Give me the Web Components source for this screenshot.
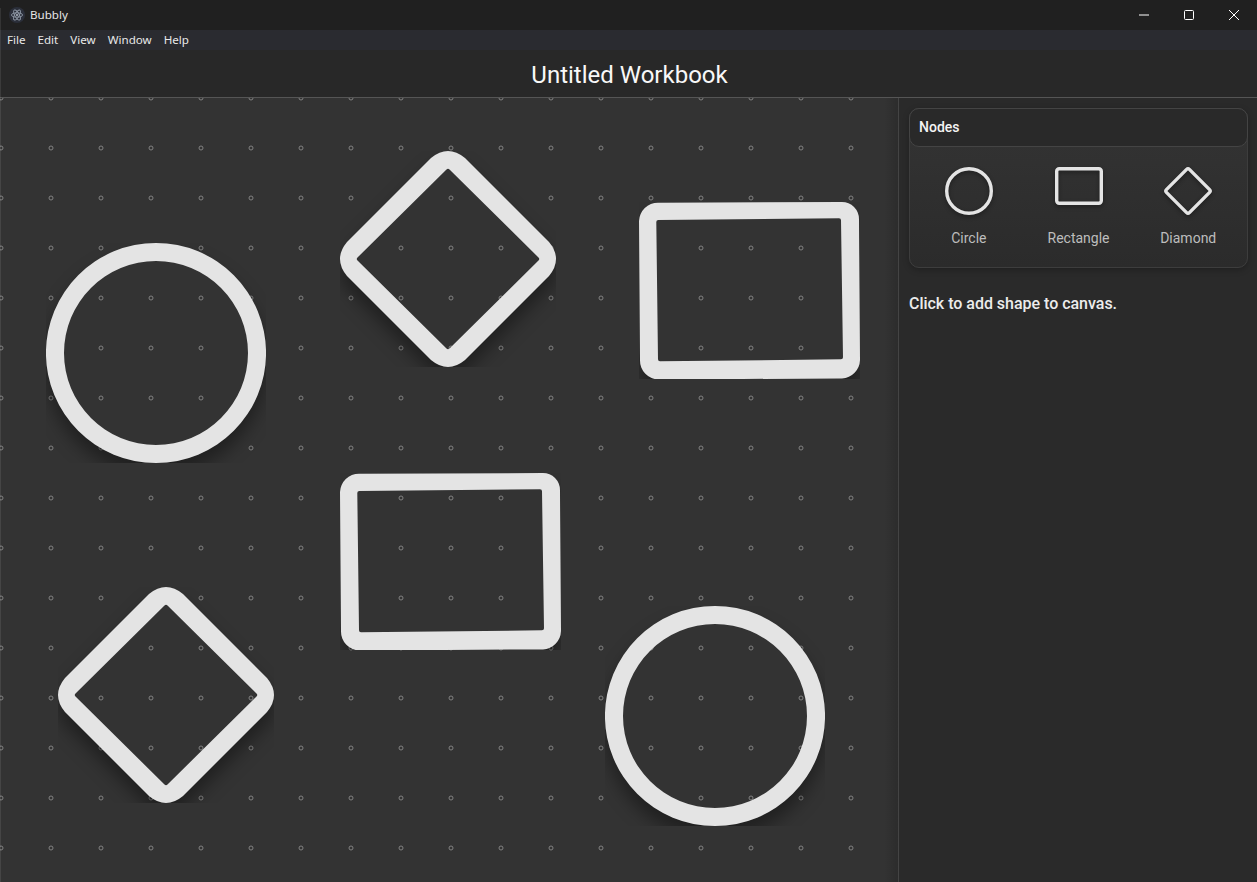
<!DOCTYPE html>
<html>
<head>
<meta charset="utf-8">
<title>Bubbly</title>
<style>
  html, body { margin: 0; height: 100%; background: #2a2a2a; overflow: hidden; }
  body { display: flex; flex-direction: column; height: 882px; position: relative; }
  /* thin window edge, lies over everything */
  body::after { content: ""; position: absolute; left: 0; top: 8px; bottom: 0; width: 1px; background: rgba(255,255,255,.09); }
</style>
</head>
<body>
<title-bar>Bubbly</title-bar>
<menu-bar></menu-bar>
<workbook-header>Untitled Workbook</workbook-header>
<main-area>
  <dot-canvas slot="canvas">
    <canvas-shape type="circle" x="46" y="145"></canvas-shape>
    <canvas-shape type="diamond" x="340" y="53"></canvas-shape>
    <canvas-shape type="rectangle" x="639" y="104"></canvas-shape>
    <canvas-shape type="rectangle" x="339.5" y="375"></canvas-shape>
    <canvas-shape type="diamond" x="58" y="489"></canvas-shape>
    <canvas-shape type="circle" x="605" y="508"></canvas-shape>
  </dot-canvas>
  <side-panel slot="side"></side-panel>
</main-area>

<script>
const SHAPES = {
  circle: {
    w: 220, h: 220,
    outer: 'M110,0 A110,110 0 1 1 110,220 A110,110 0 1 1 110,0 Z',
    inner: 'M110,18 A92,92 0 1 0 110,202 A92,92 0 1 0 110,18 Z'
  },
  diamond: {
    w: 216, h: 216,
    outer: 'M91,7 Q108,-7 125,7 L209,91 Q223,108 209,125 L125,209 Q108,223 91,209 L7,125 Q-7,108 7,91 Z',
    inner: 'M106.5,18.5 L17.5,106.5 Q16,108 17.5,109.5 L106.5,197.5 Q108,199 109.5,197.5 L198.5,109.5 Q200,108 198.5,106.5 L109.5,18.5 Q108,17 106.5,18.5 Z'
  },
  rectangle: {
    w: 221, h: 177,
    outer: 'M0,19 A19,19 0 0 1 19,0.7 L203,0 A17,17 0 0 1 220,17 L221,158 A19,19 0 0 1 203,176.4 L20,177.5 A19,19 0 0 1 1,158 Z',
    inner: 'M19.3,18 L200,16.3 Q202,16.3 202,18.3 L204,155.3 Q204,157.3 202,157.3 L21,159.3 Q19,159.3 19,157.3 L17.3,20 Q17.3,18 19.3,18 Z'
  }
}

class TitleBar extends HTMLElement {
  constructor() {
    super()
    this.attachShadow({ mode: 'open' })
    this.shadowRoot.innerHTML = `
      <style>
        :host {
          display: flex;
          align-items: center;
          height: 30px;
          box-sizing: border-box;
          padding: 0 1px 1px 0;
          flex: none;
          background: #202020;
          color: #e6e6e6;
          font: 11.6px "Noto Sans", sans-serif;
        }
        .logo { width: 16px; height: 16px; margin: 0 5px 0 9px; }
        .title { flex: 1; }
        .btn { width: 45px; height: 29px; display: flex; align-items: center; justify-content: center; }
      </style>
      <svg class="logo" viewBox="0 0 16 16" fill="none">
        <circle cx="8" cy="8" r="8" fill="#2b2f3a"/>
        <g stroke="#8f98a6" stroke-width="0.9">
          <ellipse cx="8" cy="8" rx="5.6" ry="2.2"/>
          <ellipse cx="8" cy="8" rx="5.6" ry="2.2" transform="rotate(60 8 8)"/>
          <ellipse cx="8" cy="8" rx="5.6" ry="2.2" transform="rotate(120 8 8)"/>
        </g>
        <circle cx="8" cy="8" r="1" fill="#b4bcc8"/>
      </svg>
      <span class="title"><slot></slot></span>
      <div class="btn"><svg width="10" height="10" viewBox="0 0 10 10"><path d="M0 5H10" stroke="#fff"/></svg></div>
      <div class="btn"><svg width="10" height="10" viewBox="0 0 10 10"><rect x="0.5" y="0.5" width="9" height="9" rx="1" fill="none" stroke="#fff"/></svg></div>
      <div class="btn"><svg width="10" height="10" viewBox="0 0 10 10"><path d="M0 0L10 10M10 0L0 10" stroke="#fff"/></svg></div>
    `
  }
}

class MenuBar extends HTMLElement {
  constructor() {
    super()
    this.attachShadow({ mode: 'open' })
    this.shadowRoot.innerHTML = `
      <style>
        :host {
          display: flex;
          align-items: center;
          gap: 12px;
          height: 20px;
          box-sizing: border-box;
          padding: 0 0 2px 7px;
          flex: none;
          background: #2a2b30;
          color: #e8e8e8;
          font: 11.6px "Noto Sans", sans-serif;
        }
      </style>
      <span>File</span><span>Edit</span><span>View</span><span>Window</span><span>Help</span>
    `
  }
}

class WorkbookHeader extends HTMLElement {
  constructor() {
    super()
    this.attachShadow({ mode: 'open' })
    this.shadowRoot.innerHTML = `
      <style>
        :host {
          display: flex;
          align-items: center;
          justify-content: center;
          height: 47px;
          box-sizing: content-box;
          padding-left: 2px;
          flex: none;
          background: #282828;
          border-bottom: 1px solid #555;
          color: #f8f8f8;
          font: 400 24px Roboto, sans-serif;
        }
        span { position: relative; top: 1px; }
      </style>
      <span><slot></slot></span>
    `
  }
}

class MainArea extends HTMLElement {
  constructor() {
    super()
    this.attachShadow({ mode: 'open' })
    this.shadowRoot.innerHTML = `
      <style>
        :host { display: flex; flex: 1; min-height: 0; }
      </style>
      <slot name="canvas"></slot>
      <slot name="side"></slot>
    `
  }
}

class DotCanvas extends HTMLElement {
  constructor() {
    super()
    this.attachShadow({ mode: 'open' })
    this.shadowRoot.innerHTML = `
      <style>
        :host {
          display: block;
          position: relative;
          width: 898px;
          flex: none;
          overflow: hidden;
          background: #333;
        }
        svg.dots { position: absolute; left: 0; top: 0; width: 100%; height: 100%; }
        .edge {
          position: absolute;
          top: 0;
          bottom: 0;
          right: 0;
          width: 14px;
          background: linear-gradient(to right, rgba(0,0,0,0), rgba(0,0,0,.14));
        }
      </style>
      <svg class="dots">
        <defs>
          <pattern id="dot" x="-24" y="-25" width="50" height="50" patternUnits="userSpaceOnUse">
            <circle cx="25" cy="25" r="2" fill="none" stroke="#808080" stroke-width="1"/>
          </pattern>
        </defs>
        <rect width="100%" height="100%" fill="url(#dot)"/>
      </svg>
      <div class="edge"></div>
      <slot></slot>
    `
  }
}

class CanvasShape extends HTMLElement {
  constructor() {
    super()
    this.attachShadow({ mode: 'open' })
  }

  connectedCallback() {
    const { w, h, outer, inner } = SHAPES[this.getAttribute('type')]
    // the shadow only falls outside the shape, the middle stays see through
    this.shadowRoot.innerHTML = `
      <style>
        :host {
          display: block;
          position: absolute;
          left: ${this.getAttribute('x')}px;
          top: ${this.getAttribute('y')}px;
          width: ${w}px;
          height: ${h}px;
        }
        svg { display: block; overflow: hidden; }
      </style>
      <svg width="${w}" height="${h}" viewBox="0 0 ${w} ${h}">
        <defs>
          <filter id="soft" x="-20%" y="-20%" width="140%" height="140%">
            <feGaussianBlur stdDeviation="9"/>
          </filter>
          <mask id="hole">
            <rect width="${w}" height="${h}" fill="#fff"/>
            <path d="${outer}" fill="#000"/>
          </mask>
        </defs>
        <g mask="url(#hole)">
          <path d="${outer}" fill="#000" fill-opacity=".38" filter="url(#soft)" transform="translate(0 12)"/>
        </g>
        <path d="${outer} ${inner}" fill="#e4e4e4" fill-rule="evenodd"/>
      </svg>
    `
  }
}

class NodeButton extends HTMLElement {
  constructor() {
    super()
    this.attachShadow({ mode: 'open' })
  }

  connectedCallback() {
    const type = this.getAttribute('type')
    const icons = {
      circle: '<circle cx="24" cy="24" r="22.3" fill="none" stroke="#e4e4e4" stroke-width="3.4"/>',
      rectangle: '<rect x="1.7" y="1.7" width="44.6" height="34.6" rx="2.5" fill="none" stroke="#e4e4e4" stroke-width="3.4"/>',
      diamond: '<path d="M22.6 2.4 L2.4 22.6 Q1 24 2.4 25.4 L22.6 45.6 Q24 47 25.4 45.6 L45.6 25.4 Q47 24 45.6 22.6 L25.4 2.4 Q24 1 22.6 2.4 Z" fill="none" stroke="#e4e4e4" stroke-width="3.4"/>'
    }
    this.shadowRoot.innerHTML = `
      <style>
        :host {
          display: flex;
          flex-direction: column;
          align-items: center;
          color: #bdbdbd;
          font: 14px Roboto, sans-serif;
        }
        svg { display: block; filter: drop-shadow(0 2px 2px rgba(0,0,0,.35)); }
        .icon { height: 48px; }
        span { margin-top: 15px; line-height: 17px; }
      </style>
      <div class="icon"><svg width="48" height="48" viewBox="0 0 48 48">${icons[type]}</svg></div>
      <span><slot></slot></span>
    `
  }
}

class NodesCard extends HTMLElement {
  constructor() {
    super()
    this.attachShadow({ mode: 'open' })
    this.shadowRoot.innerHTML = `
      <style>
        :host {
          display: block;
          height: 160px;
          box-sizing: border-box;
          border: 1px solid #3d3d3d;
          border-radius: 10px;
          background: linear-gradient(#343434, #2b2b2b);
          box-shadow: 0 2px 6px rgba(0,0,0,.25);
        }
        header {
          height: 39px;
          box-sizing: border-box;
          margin: -1px -1px 0;
          padding: 0 0 2px 9px;
          display: flex;
          align-items: center;
          background: #292929;
          border: 1px solid #444;
          border-radius: 10px;
          color: #f4f4f4;
          font: 500 14px Roboto, sans-serif;
        }
        .items {
          display: grid;
          grid-template-columns: repeat(3, 109.7px);
          padding: 20px 0 0 4px;
        }
      </style>
      <header>Nodes</header>
      <div class="items"><slot></slot></div>
    `
  }
}

class SidePanel extends HTMLElement {
  constructor() {
    super()
    this.attachShadow({ mode: 'open' })
    this.shadowRoot.innerHTML = `
      <style>
        :host {
          display: block;
          flex: 1;
          box-sizing: border-box;
          padding: 10px 9px 0 10px;
          background: #2a2a2a;
          border-left: 1px solid #444;
        }
        p {
          margin: 26px 0 0;
          color: #ececec;
          font: 500 16px Roboto, sans-serif;
          letter-spacing: -0.02px;
        }
      </style>
      <nodes-card>
        <node-button type="circle">Circle</node-button>
        <node-button type="rectangle">Rectangle</node-button>
        <node-button type="diamond">Diamond</node-button>
      </nodes-card>
      <p>Click to add shape to canvas.</p>
    `
  }
}

customElements.define('title-bar', TitleBar)
customElements.define('menu-bar', MenuBar)
customElements.define('workbook-header', WorkbookHeader)
customElements.define('main-area', MainArea)
customElements.define('dot-canvas', DotCanvas)
customElements.define('canvas-shape', CanvasShape)
customElements.define('node-button', NodeButton)
customElements.define('nodes-card', NodesCard)
customElements.define('side-panel', SidePanel)
</script>
</body>
</html>
